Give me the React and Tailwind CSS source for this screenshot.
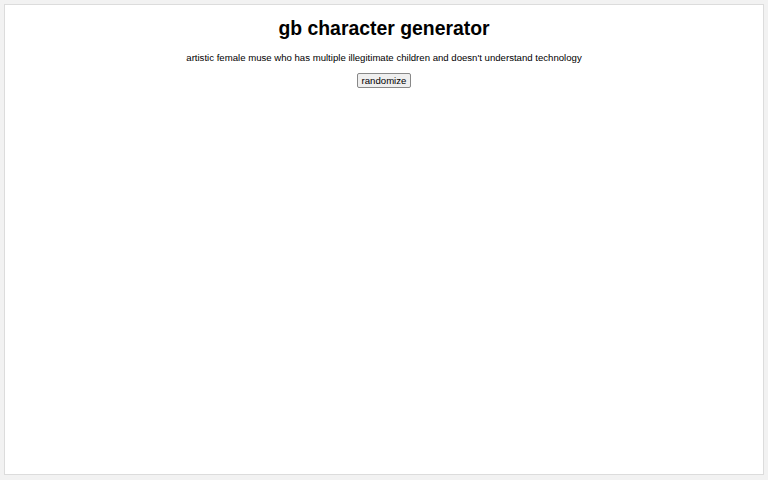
export default function App() {
  return (
    <div className="h-[480px] w-[768px] bg-[#f2f2f2] p-[4px] font-['Liberation_Sans',Arial,sans-serif] text-black">
      <div className="flex h-[471px] flex-col items-center border border-[#dcdcdc] bg-white">
        <h1 className="mt-[12px] text-[19.4px] font-bold leading-[23px]">gb character generator</h1>
        <p className="mt-[12px] text-[9.6px] leading-[12px]">
          artistic female muse who has multiple illegitimate children and doesn't understand technology
        </p>
        <button
          type="button"
          className="mt-[9px] h-[15px] rounded-[2px] border border-[#888] bg-[#efefef] px-[4px] text-[9.6px] leading-[12px]"
        >
          randomize
        </button>
      </div>
    </div>
  );
}
